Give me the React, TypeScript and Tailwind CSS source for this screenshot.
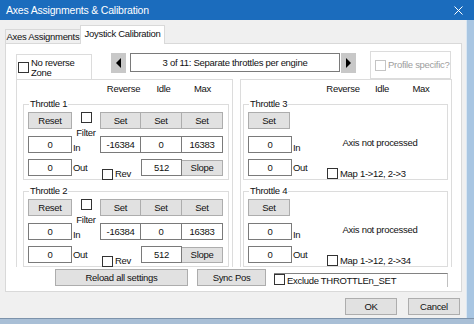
import React from 'react';

type Kids = { children?: React.ReactNode; className?: string };

function Btn({ children, className = '' }: Kids) {
  return (
    <div className={`flex items-center justify-center bg-[#e1e1e1] border border-[#adadad] shrink-0 ${className}`}>
      {children}
    </div>
  );
}

function Field({ children, className = '' }: Kids) {
  return (
    <div className={`flex items-center justify-center bg-white border border-[#7a7a7a] shrink-0 ${className}`}>
      {children}
    </div>
  );
}

function Check({ className = '' }: { className?: string }) {
  return <div className={`w-[11px] h-[11px] border bg-white shrink-0 ${className || 'border-[#333333]'}`} />;
}

function Group({ label, children }: { label: string; children: React.ReactNode }) {
  return (
    <div className="relative h-[76px] border border-[#dcdcdc] pt-[7px] pl-[4px] flex flex-col">
      {/* groupbox caption sits on the top border */}
      <span className="absolute top-[-6px] left-[5px] bg-white px-[1px]">{label}</span>
      {children}
    </div>
  );
}

function ActiveThrottle({ label }: { label: string }) {
  return (
    <Group label={label}>
      <div className="flex h-[17px]">
        <Btn className="w-[44px] h-[17px]">Reset</Btn>
        <div className="w-[28px] flex flex-col items-center">
          <Check />
          <span className="mt-[5px]">Filter</span>
        </div>
        <Btn className="w-[41px] h-[17px]">Set</Btn>
        <Btn className="w-[41px] h-[17px] border-l-0">Set</Btn>
        <Btn className="w-[41px] h-[17px] border-l-0">Set</Btn>
      </div>
      <div className="flex h-[17px] mt-[7px]">
        <Field className="w-[44px] h-[17px]">0</Field>
        <span className="w-[28px] self-end pl-[1px] pb-[1px]">In</span>
        <Field className="w-[41px] h-[17px]">-16384</Field>
        <Field className="w-[41px] h-[17px] border-l-0">0</Field>
        <Field className="w-[41px] h-[17px] border-l-0">16383</Field>
      </div>
      <div className="flex h-[17px] mt-[6px]">
        <Field className="w-[44px] h-[17px]">0</Field>
        <span className="w-[28px] self-center pl-[1px]">Out</span>
        <div className="w-[41px] h-[17px] flex items-center gap-[2px] pl-[2px] pt-[13px]">
          <Check />
          <span>Rev</span>
        </div>
        <Field className="w-[41px] h-[17px]">512</Field>
        <Btn className="w-[41px] h-[16px] mt-px border-l-0">Slope</Btn>
      </div>
    </Group>
  );
}

function IdleThrottle({ label, map }: { label: string; map: string }) {
  return (
    <Group label={label}>
      <div className="flex h-[17px]">
        <Btn className="w-[42px] h-[17px]">Set</Btn>
      </div>
      <div className="flex h-[17px] mt-[7px]">
        <Field className="w-[44px] h-[17px]">0</Field>
        <span className="w-[36px] self-end pl-[1px] pb-[1px]">In</span>
        <span className="w-[104px] self-center text-center -mt-[3px]">Axis not processed</span>
      </div>
      <div className="flex h-[17px] mt-[6px]">
        <Field className="w-[44px] h-[17px]">0</Field>
        <span className="w-[35px] self-center pl-[1px]">Out</span>
        <div className="h-[17px] flex items-center gap-[2px] pt-[12px]">
          <Check />
          <span>{map}</span>
        </div>
      </div>
    </Group>
  );
}

function Arrow({ dir }: { dir: 'left' | 'right' }) {
  return (
    <div className="w-[15px] h-[20px] mt-[2px] bg-[#c8c8c8] flex items-center justify-center shrink-0">
      <svg width="5" height="10" viewBox="0 0 5 10">
        {dir === 'left' ? <polygon points="5,0 5,10 0,5" fill="#000" /> : <polygon points="0,0 0,10 5,5" fill="#000" />}
      </svg>
    </div>
  );
}

export default function App() {
  return (
    <div className="w-[474px] h-[324px] overflow-hidden flex flex-col bg-[#f0f0f0] font-['Liberation_Sans',Arial,sans-serif] text-[9.5px] tracking-[-0.3px] text-[#111111] leading-none">
      {/* title bar */}
      <div className="h-[20px] shrink-0 bg-[#1b6cbd] flex items-center justify-between pl-[6px] pr-[11px] text-white text-[10.5px] tracking-[-0.2px]">
        <span>Axes Assignments &amp; Calibration</span>
        <svg width="9" height="9" viewBox="0 0 9 9">
          <path d="M0.5 0.5 L8.5 8.5 M8.5 0.5 L0.5 8.5" stroke="#ffffff" strokeWidth="1" />
        </svg>
      </div>

      <div className="flex-1 flex">
        <div className="w-[466px] flex flex-col">
          {/* tabs */}
          <div className="h-[18px] mt-[5px] pl-[5px] flex items-end">
            <div className="w-[76px] h-[14px] border border-b-0 border-[#d9d9d9] bg-[#f0f0f0] flex items-center justify-center">
              Axes Assignments
            </div>
            <div className="relative z-10 -mb-px w-[85px] h-[19px] border border-b-0 border-[#d9d9d9] bg-white flex items-center justify-center -ml-px pb-[2px]">
              Joystick Calibration
            </div>
          </div>

          {/* tab page */}
          <div className="ml-[5px] w-[457px] h-[249px] border border-[#d9d9d9] bg-white pt-[7px] pl-[10px] flex flex-col">
            <div className="h-[28px] flex items-start">
              <div className="w-[76px] h-[25px] mt-[3px] border-t border-l border-r border-[#dcdcdc] flex items-center gap-[2px] pl-px pt-[1px] self-start">
                <Check />
                <div className="leading-[10px]">
                  No reverse
                  <br />
                  Zone
                </div>
              </div>
              <div className="ml-[19px]">
                <Arrow dir="left" />
              </div>
              <div className="ml-[4px] mt-[2px] w-[210px] h-[19px] border border-[#7a7a7a] flex items-center justify-center">
                3 of 11: Separate throttles per engine
              </div>
              <div className="ml-px">
                <Arrow dir="right" />
              </div>
              <div className="ml-[14px] w-[81px] h-[28px] border border-[#dcdcdc] flex items-center gap-[2px] pl-[4px] text-[#9d9d9d]">
                <Check className="border-[#c4c4c4]" />
                <span>Profile specific?</span>
              </div>
            </div>

            <div className="flex">
              <div className="w-[217px] border-t border-l border-r border-[#dcdcdc]">
                <div className="h-[18px] pl-[86px] flex items-center">
                  <span className="w-[41px] text-center">Reverse</span>
                  <span className="w-[39px] text-center">Idle</span>
                  <span className="w-[39px] text-center">Max</span>
                </div>
                <div className="ml-[6px] w-[206px] mt-[6px] flex flex-col gap-[11px]">
                  <ActiveThrottle label="Throttle 1" />
                  <ActiveThrottle label="Throttle 2" />
                </div>
              </div>
              <div className="ml-[7px] w-[212px] border-t border-l border-r border-[#dcdcdc]">
                <div className="h-[18px] pl-[82px] flex items-center">
                  <span className="w-[40px] text-center">Reverse</span>
                  <span className="w-[38px] text-center">Idle</span>
                  <span className="w-[40px] text-center">Max</span>
                </div>
                <div className="ml-[2px] w-[205px] mt-[6px] flex flex-col gap-[11px]">
                  <IdleThrottle label="Throttle 3" map="Map 1->12, 2->3" />
                  <IdleThrottle label="Throttle 4" map="Map 1->12, 2->34" />
                </div>
              </div>
            </div>

            <div className="flex items-start mt-[2px] pl-[39px]">
              <Btn className="w-[133px] h-[17px]">Reload all settings</Btn>
              <Btn className="ml-[9px] w-[69px] h-[17px]">Sync Pos</Btn>
              <div className="ml-[8px] mt-[4px] w-[174px] h-[14px] border-t border-t-[#828282] border-r border-r-[#c0c0c0] flex items-start gap-[2px]">
                <Check />
                <span className="mt-[2px]">Exclude THROTTLEn_SET</span>
              </div>
            </div>
          </div>

          <div className="mt-[6px] flex justify-end gap-[11px] pr-[6px]">
            <Btn className="w-[52px] h-[17px]">OK</Btn>
            <Btn className="w-[52px] h-[17px]">Cancel</Btn>
          </div>
        </div>
        <div className="flex-1 bg-[#a9c6e2] border-l border-[#dbe7f2]" />
      </div>
      <div className="h-[6px] shrink-0 bg-[#a9bfd6] border-t border-[#7d93ab]" />
    </div>
  );
}
